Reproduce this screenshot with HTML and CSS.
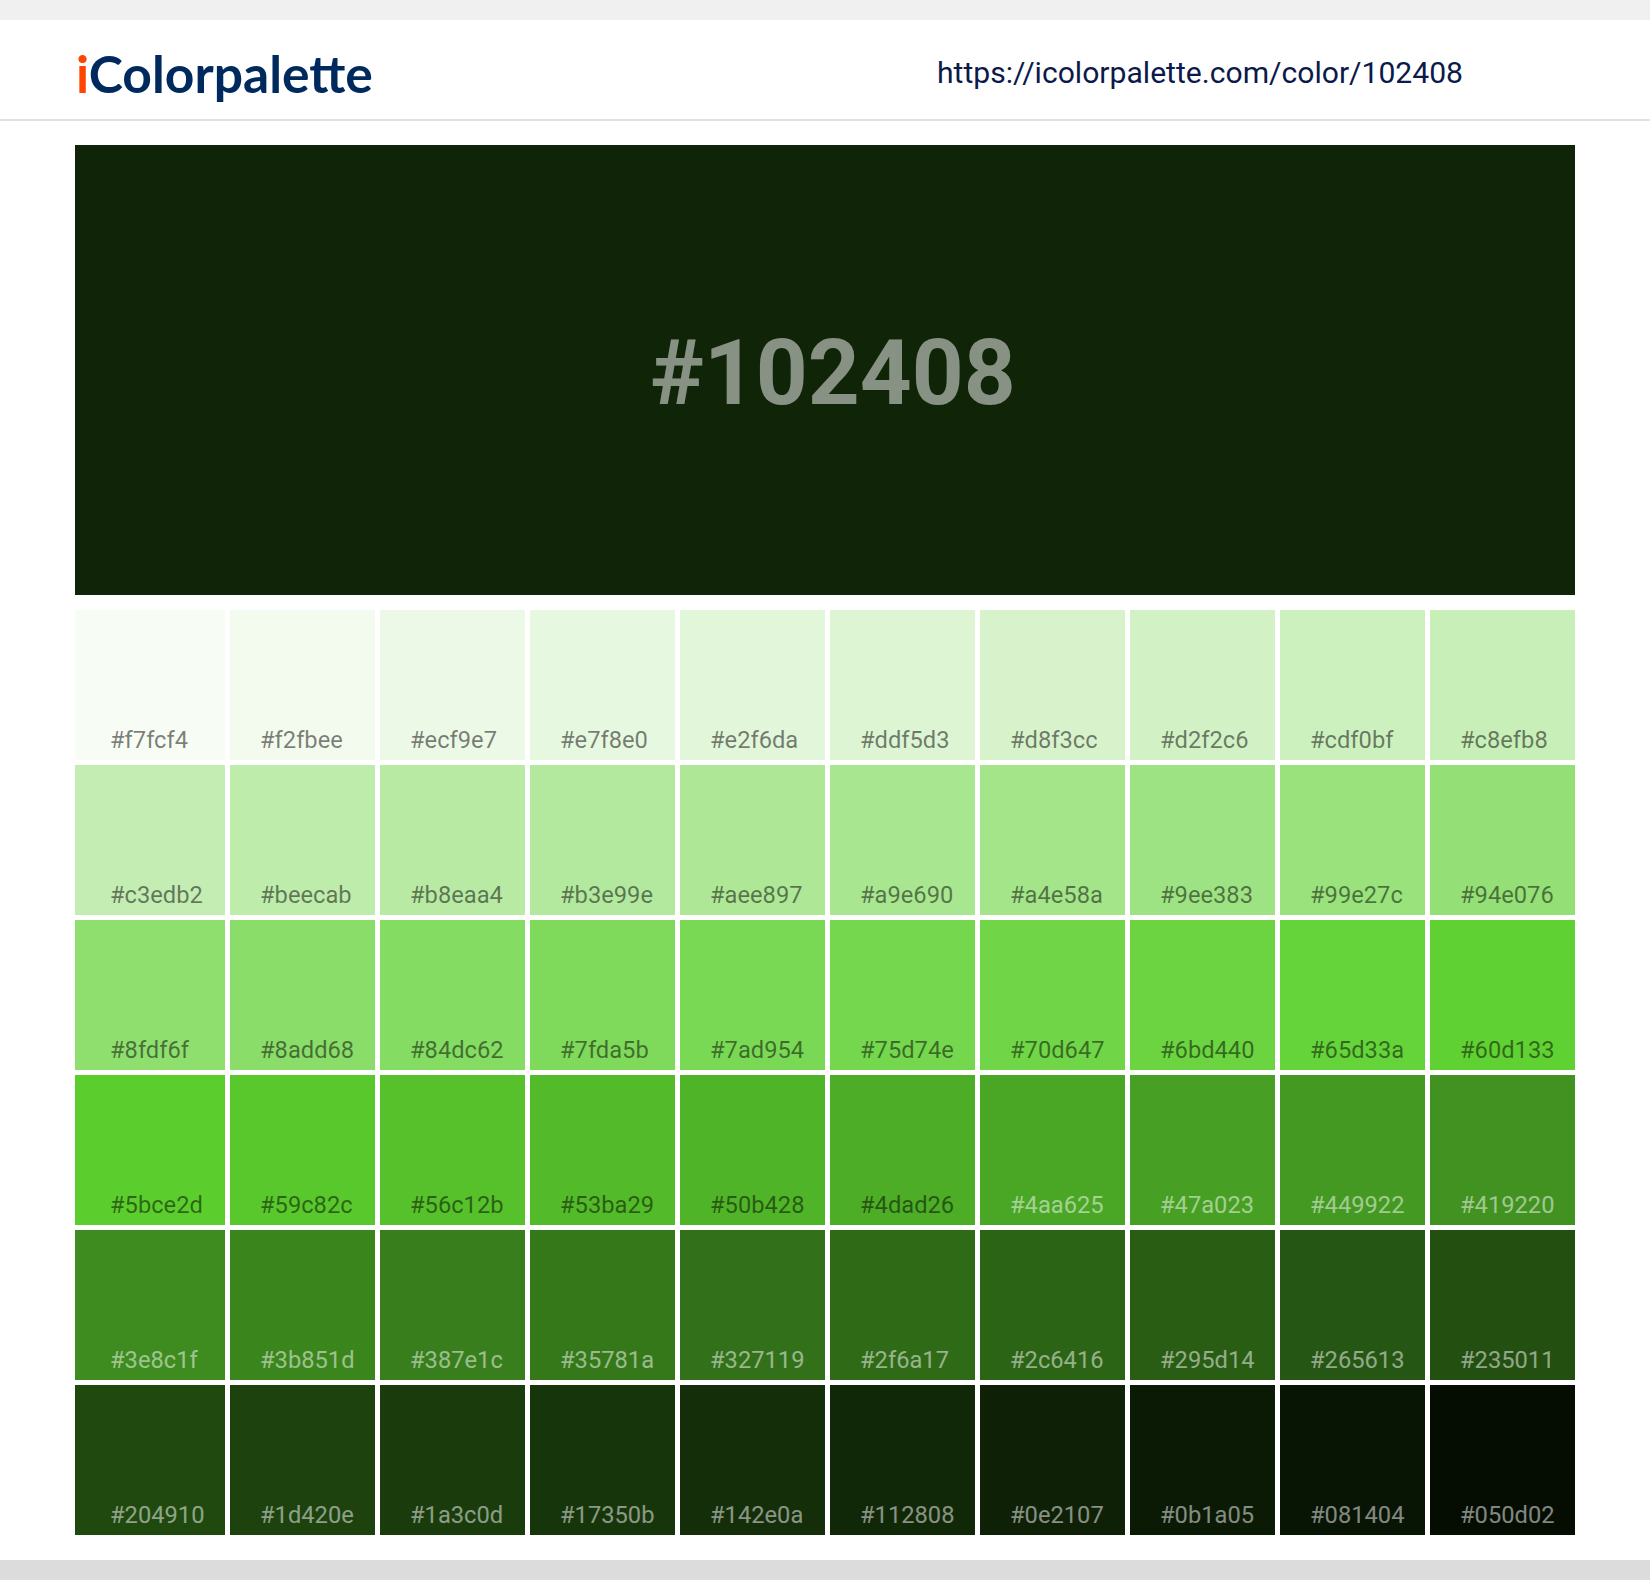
FILE: index.html
```html
<!DOCTYPE html>
<html lang="en">
<head>
<meta charset="utf-8">
<title>#102408 - iColorpalette</title>
<link rel="stylesheet" href="styles.css">
</head>
<body>
<div class="band-top"></div>
<header class="site-header">
  <a class="logo"><span class="logo-i">i</span>Colorpalette</a>
  <span class="url">https://icolorpalette.com/color/102408</span>
</header>
<main class="content">
  <section class="hero"><span class="hero-code">#102408</span></section>
  <section class="grid">
    <div class="sw on-light" style="background:#f7fcf4">#f7fcf4</div>
    <div class="sw on-light" style="background:#f2fbee">#f2fbee</div>
    <div class="sw on-light" style="background:#ecf9e7">#ecf9e7</div>
    <div class="sw on-light" style="background:#e7f8e0">#e7f8e0</div>
    <div class="sw on-light" style="background:#e2f6da">#e2f6da</div>
    <div class="sw on-light" style="background:#ddf5d3">#ddf5d3</div>
    <div class="sw on-light" style="background:#d8f3cc">#d8f3cc</div>
    <div class="sw on-light" style="background:#d2f2c6">#d2f2c6</div>
    <div class="sw on-light" style="background:#cdf0bf">#cdf0bf</div>
    <div class="sw on-light" style="background:#c8efb8">#c8efb8</div>
    <div class="sw on-light" style="background:#c3edb2">#c3edb2</div>
    <div class="sw on-light" style="background:#beecab">#beecab</div>
    <div class="sw on-light" style="background:#b8eaa4">#b8eaa4</div>
    <div class="sw on-light" style="background:#b3e99e">#b3e99e</div>
    <div class="sw on-light" style="background:#aee897">#aee897</div>
    <div class="sw on-light" style="background:#a9e690">#a9e690</div>
    <div class="sw on-light" style="background:#a4e58a">#a4e58a</div>
    <div class="sw on-light" style="background:#9ee383">#9ee383</div>
    <div class="sw on-light" style="background:#99e27c">#99e27c</div>
    <div class="sw on-light" style="background:#94e076">#94e076</div>
    <div class="sw on-light" style="background:#8fdf6f">#8fdf6f</div>
    <div class="sw on-light" style="background:#8add68">#8add68</div>
    <div class="sw on-light" style="background:#84dc62">#84dc62</div>
    <div class="sw on-light" style="background:#7fda5b">#7fda5b</div>
    <div class="sw on-light" style="background:#7ad954">#7ad954</div>
    <div class="sw on-light" style="background:#75d74e">#75d74e</div>
    <div class="sw on-light" style="background:#70d647">#70d647</div>
    <div class="sw on-light" style="background:#6bd440">#6bd440</div>
    <div class="sw on-light" style="background:#65d33a">#65d33a</div>
    <div class="sw on-light" style="background:#60d133">#60d133</div>
    <div class="sw on-light" style="background:#5bce2d">#5bce2d</div>
    <div class="sw on-light" style="background:#59c82c">#59c82c</div>
    <div class="sw on-light" style="background:#56c12b">#56c12b</div>
    <div class="sw on-light" style="background:#53ba29">#53ba29</div>
    <div class="sw on-light" style="background:#50b428">#50b428</div>
    <div class="sw on-light" style="background:#4dad26">#4dad26</div>
    <div class="sw on-dark" style="background:#4aa625">#4aa625</div>
    <div class="sw on-dark" style="background:#47a023">#47a023</div>
    <div class="sw on-dark" style="background:#449922">#449922</div>
    <div class="sw on-dark" style="background:#419220">#419220</div>
    <div class="sw on-dark" style="background:#3e8c1f">#3e8c1f</div>
    <div class="sw on-dark" style="background:#3b851d">#3b851d</div>
    <div class="sw on-dark" style="background:#387e1c">#387e1c</div>
    <div class="sw on-dark" style="background:#35781a">#35781a</div>
    <div class="sw on-dark" style="background:#327119">#327119</div>
    <div class="sw on-dark" style="background:#2f6a17">#2f6a17</div>
    <div class="sw on-dark" style="background:#2c6416">#2c6416</div>
    <div class="sw on-dark" style="background:#295d14">#295d14</div>
    <div class="sw on-dark" style="background:#265613">#265613</div>
    <div class="sw on-dark" style="background:#235011">#235011</div>
    <div class="sw on-dark" style="background:#204910">#204910</div>
    <div class="sw on-dark" style="background:#1d420e">#1d420e</div>
    <div class="sw on-dark" style="background:#1a3c0d">#1a3c0d</div>
    <div class="sw on-dark" style="background:#17350b">#17350b</div>
    <div class="sw on-dark" style="background:#142e0a">#142e0a</div>
    <div class="sw on-dark" style="background:#112808">#112808</div>
    <div class="sw on-dark" style="background:#0e2107">#0e2107</div>
    <div class="sw on-dark" style="background:#0b1a05">#0b1a05</div>
    <div class="sw on-dark" style="background:#081404">#081404</div>
    <div class="sw on-dark" style="background:#050d02">#050d02</div>
  </section>
</main>
<div class="band-bottom"></div>
</body>
</html>
```
FILE: styles.css
```css
* { box-sizing: border-box; }
html, body { margin: 0; padding: 0; background: #fff; }
body { font-family: Roboto, "Liberation Sans", sans-serif; width: 1650px; }

.band-top { height: 20px; background: #f0f0f0; }
.site-header {
  height: 101px;
  background: #fff;
  border-bottom: 2px solid #e0e0e0;
  display: flex;
  align-items: flex-start;
  padding-left: 76px;
}
.logo {
  font-family: Lato, "Open Sans", sans-serif;
  font-weight: 700;
  font-size: 51.6px;
  line-height: 60px;
  margin-top: 23px;
  color: #002a5e;
  width: 861px;
}
.logo-i { color: #ff4500; }
.url {
  font-size: 30.12px;
  line-height: 36px;
  margin-top: 35px;
  color: #0b1a4a;
}

.content { padding: 24px 75px 25px; }
.hero {
  height: 450px;
  background: #102408;
  display: flex;
  align-items: center;
  justify-content: center;
  padding-top: 6px;
  margin-bottom: 15px;
}
.hero-code {
  font-size: 90.6px;
  font-weight: 700;
  line-height: 1;
  color: rgba(255, 255, 255, 0.5);
  margin-left: 16px;
}
.grid {
  display: grid;
  grid-template-columns: 150px repeat(9, 145px);
  grid-auto-rows: 150px;
  gap: 5px;
}
.sw {
  display: flex;
  align-items: flex-end;
  font-size: 23.7px;
  line-height: 28px;
  padding: 0 0 6px 30px;
}
.sw:nth-child(10n + 1) { padding-left: 35px; }
.on-light { color: rgba(0, 0, 0, 0.5); }
.on-dark { color: rgba(255, 255, 255, 0.5); }
.band-bottom { height: 20px; background: #dcdcdc; }
```
